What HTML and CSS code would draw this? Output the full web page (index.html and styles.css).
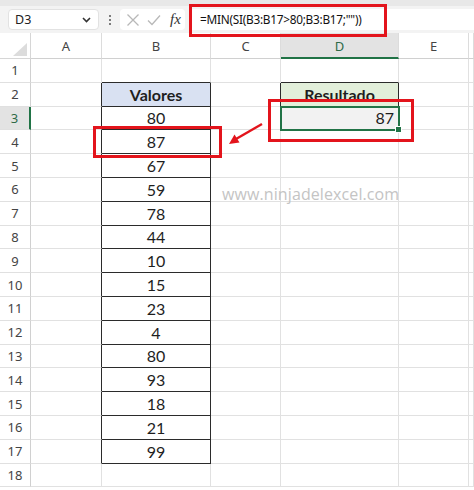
FILE: index.html
```html
<!DOCTYPE html>
<html lang="pt">
<head>
<meta charset="utf-8">
<link rel="stylesheet" href="styles.css">
</head>
<body>
<div class="page">
  <div class="bar">
    <div class="namebox">
      <span class="ref">D3</span>
      <svg class="chev" width="9" height="6" viewBox="0 0 9 6"><path d="M1 1 L4.5 4.5 L8 1" fill="none" stroke="#333" stroke-width="1.6"/></svg>
    </div>
    <div class="dots"><i></i><i></i><i></i></div>
    <div class="fxbox">
      <svg width="14" height="14" viewBox="0 0 14 14"><path d="M1.5 1.5 L12.5 12.5 M12.5 1.5 L1.5 12.5" stroke="#b8b8b8" stroke-width="1.3"/></svg>
      <svg width="14" height="14" viewBox="0 0 14 14"><path d="M1 7.5 L5 11.5 L13 2.5" fill="none" stroke="#b8b8b8" stroke-width="1.3"/></svg>
      <span class="fx">fx</span>
    </div>
    <div class="formula">=MIN(SI(B3:B17&gt;80;B3:B17;""))</div>
  </div>

  <div class="sheet">
    <div class="corner"></div><div class="ch">A</div><div class="ch">B</div><div class="ch">C</div><div class="ch on">D</div><div class="ch">E</div><div class="ch"></div>

    <div class="rh">1</div><div class="c"></div><div class="c bb"></div><div class="c"></div><div class="c bb"></div><div class="c"></div><div class="c"></div>
    <div class="rh">2</div><div class="c br"></div><div class="c t hb">Valores</div><div class="c br"></div><div class="c t hg">Resultado</div><div class="c"></div><div class="c"></div>
    <div class="rh on">3</div><div class="c br"></div><div class="c t">80</div><div class="c br"></div><div class="c t sel">87<span class="handle"></span></div><div class="c"></div><div class="c"></div>
    <div class="rh">4</div><div class="c br"></div><div class="c t">87</div><div class="c"></div><div class="c"></div><div class="c"></div><div class="c"></div>
    <div class="rh">5</div><div class="c br"></div><div class="c t">67</div><div class="c"></div><div class="c"></div><div class="c"></div><div class="c"></div>
    <div class="rh">6</div><div class="c br"></div><div class="c t">59</div><div class="c"></div><div class="c"></div><div class="c"></div><div class="c"></div>
    <div class="rh">7</div><div class="c br"></div><div class="c t">78</div><div class="c"></div><div class="c"></div><div class="c"></div><div class="c"></div>
    <div class="rh">8</div><div class="c br"></div><div class="c t">44</div><div class="c"></div><div class="c"></div><div class="c"></div><div class="c"></div>
    <div class="rh">9</div><div class="c br"></div><div class="c t">10</div><div class="c"></div><div class="c"></div><div class="c"></div><div class="c"></div>
    <div class="rh">10</div><div class="c br"></div><div class="c t">15</div><div class="c"></div><div class="c"></div><div class="c"></div><div class="c"></div>
    <div class="rh">11</div><div class="c br"></div><div class="c t">23</div><div class="c"></div><div class="c"></div><div class="c"></div><div class="c"></div>
    <div class="rh">12</div><div class="c br"></div><div class="c t">4</div><div class="c"></div><div class="c"></div><div class="c"></div><div class="c"></div>
    <div class="rh">13</div><div class="c br"></div><div class="c t">80</div><div class="c"></div><div class="c"></div><div class="c"></div><div class="c"></div>
    <div class="rh">14</div><div class="c br"></div><div class="c t">93</div><div class="c"></div><div class="c"></div><div class="c"></div><div class="c"></div>
    <div class="rh">15</div><div class="c br"></div><div class="c t">18</div><div class="c"></div><div class="c"></div><div class="c"></div><div class="c"></div>
    <div class="rh">16</div><div class="c br"></div><div class="c t">21</div><div class="c"></div><div class="c"></div><div class="c"></div><div class="c"></div>
    <div class="rh">17</div><div class="c br"></div><div class="c t">99</div><div class="c"></div><div class="c"></div><div class="c"></div><div class="c"></div>
    <div class="rh">18</div><div class="c"></div><div class="c"></div><div class="c"></div><div class="c"></div><div class="c"></div><div class="c"></div>
  </div>

  <div class="mark mark-formula"></div>
  <div class="mark mark-result"></div>
  <div class="mark mark-b4"></div>
  <svg class="arrow" width="40" height="30" viewBox="0 0 40 30">
    <path d="M35 3 L9 18" stroke="#e3141c" stroke-width="2.4" fill="none"/>
    <path d="M2 23 L7.5 13.5 L12.5 21.5 Z" fill="#e3141c"/>
  </svg>
  <div class="watermark">www.ninjadelexcel.com</div>
</div>
</body>
</html>
```

FILE: styles.css
```css
* { box-sizing: border-box; }
html, body { margin: 0; padding: 0; background: #fff; }
.page {
  position: relative;
  width: 474px;
  height: 490px;
  overflow: hidden;
  font-family: "Noto Sans", "Open Sans", sans-serif;
}

/* formula bar */
.bar {
  height: 33px;
  background: linear-gradient(#e8e8e8 0 6px, #f3f3f3 6px);
  display: flex;
  align-items: flex-start;
  padding: 9px 0 0 8px;
}
.namebox {
  width: 91px;
  height: 21px;
  background: #fff;
  border: 1px solid #e2e2e2;
  border-radius: 4px;
  display: flex;
  align-items: center;
  justify-content: space-between;
  padding: 0 7px 0 6px;
}
.ref { font-size: 12.5px; color: #222; }
.chev { display: block; }
.dots {
  width: 21px;
  height: 21px;
  display: flex;
  flex-direction: column;
  align-items: center;
  justify-content: center;
  gap: 2px;
}
.dots i { width: 2px; height: 2px; background: #555; border-radius: 1px; display: block; }
.fxbox {
  width: 65px;
  height: 21px;
  background: #fff;
  border-radius: 4px;
  display: flex;
  align-items: center;
  padding: 0 0 0 6px;
  gap: 7px;
}
.fxbox svg { display: block; }
.fx {
  font-family: "Liberation Serif", serif;
  font-style: italic;
  font-size: 15px;
  color: #333;
  margin-left: 2px;
}
.formula {
  flex: 1;
  height: 21px;
  margin-left: 4px;
  background: #fff;
  font-size: 11.8px;
  letter-spacing: -0.25px;
  color: #111;
  line-height: 21px;
  padding-left: 11px;
  white-space: nowrap;
}

/* sheet grid */
.sheet {
  display: grid;
  grid-template-columns: 31px 71px 109px 70px 118px 70px 1fr;
  grid-template-rows: 26px repeat(18, 23.8px);
}
.corner {
  position: relative;
  border-right: 1px solid #d6d6d6;
  border-bottom: 1px solid #d6d6d6;
}
.corner::after {
  content: "";
  position: absolute;
  left: 13px;
  top: 10px;
  width: 14px;
  height: 13px;
  background: #dcdcdc;
  clip-path: polygon(100% 0, 100% 100%, 0 100%);
}
.ch {
  border-right: 1px solid #dcdcdc;
  border-bottom: 1px solid #d0d0d0;
  display: flex;
  align-items: center;
  justify-content: center;
  font-size: 13px;
  color: #444;
  padding-top: 1px;
}
.ch.on {
  background: #e3e3e3;
  border-bottom: 2px solid #217346;
  color: #2e6a47;
}
.rh {
  border-right: 1px solid #d0d0d0;
  border-bottom: 1px solid #e0e0e0;
  display: flex;
  align-items: center;
  justify-content: center;
  font-size: 13px;
  color: #444;
}
.rh.on {
  background: #e3e3e3;
  border-right: 2px solid #217346;
  color: #2e6a47;
}
.c {
  border-right: 1px solid #e1e1e1;
  border-bottom: 1px solid #e1e1e1;
  font-family: Lato, "Liberation Sans", sans-serif;
  font-size: 16px;
  color: #1e1e1e;
  display: flex;
  align-items: center;
  justify-content: center;
}
.c.bb { border-bottom-color: #2b2b2b; }
.c.br { border-right-color: #2b2b2b; }
.c.t { border-right-color: #2b2b2b; border-bottom-color: #2b2b2b; }
.hb { background: #d9e1f2; font-weight: 700; }
.hg { background: #e2efda; font-weight: 700; }
.sel {
  position: relative;
  background: #f2f2f2;
  justify-content: flex-end;
  padding-right: 4px;
  outline: 2px solid #217346;
  outline-offset: -1px;
}
.handle {
  position: absolute;
  right: -4px;
  bottom: -4px;
  width: 7px;
  height: 7px;
  background: #217346;
  border: 1px solid #fff;
}

/* annotations */
.mark {
  position: absolute;
  border: 3px solid #e3141c;
}
.mark-formula { left: 189px; top: 4px; width: 198px; height: 33px; }
.mark-result { left: 268px; top: 99px; width: 146px; height: 43px; }
.mark-b4 { left: 93px; top: 126px; width: 129px; height: 32px; }
.arrow { position: absolute; left: 227px; top: 121px; }
.watermark {
  position: absolute;
  left: 222px;
  top: 183px;
  font-family: "Open Sans", sans-serif;
  font-size: 16px;
  color: #c4c4c4;
  letter-spacing: 0.1px;
}
```
